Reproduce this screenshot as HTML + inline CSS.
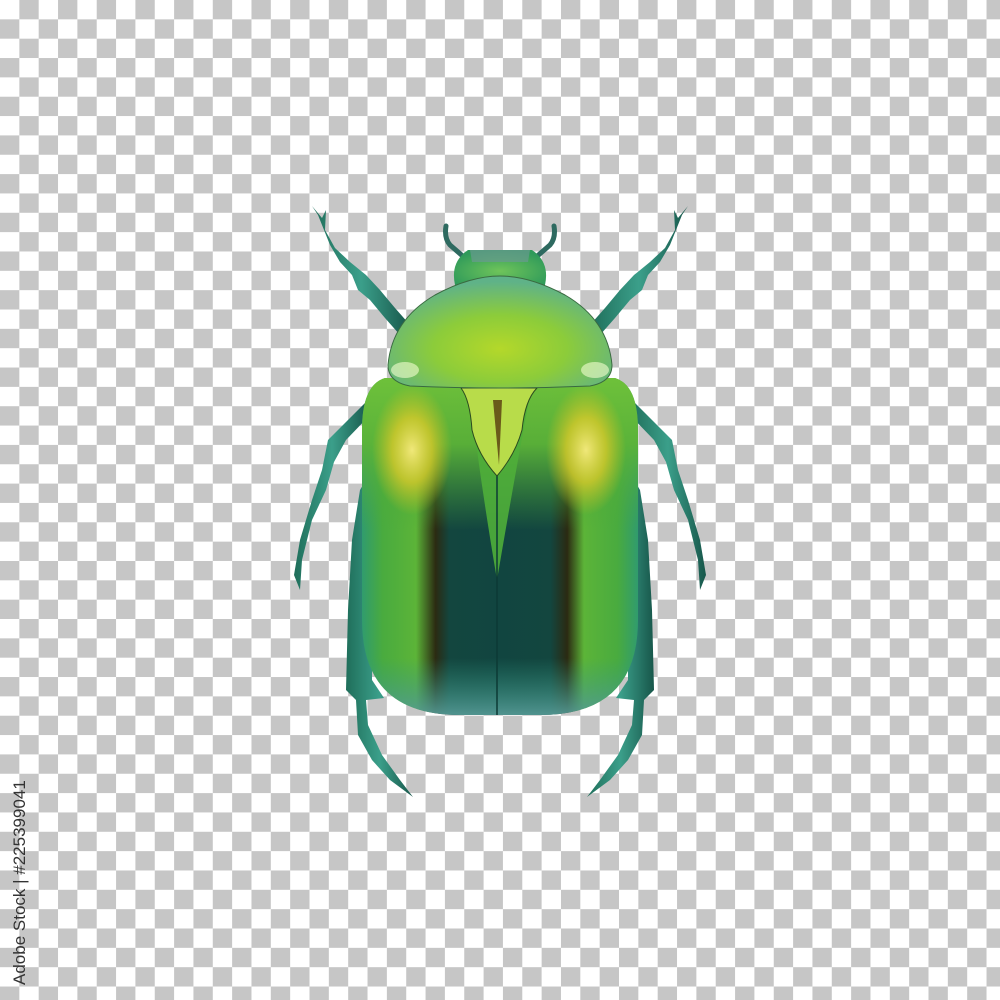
<!DOCTYPE html>
<html><head><style>
html,body{margin:0;padding:0;width:1000px;height:1000px;overflow:hidden}
body{background:repeating-conic-gradient(#c6c6c6 0 25%,#fff 0 50%) 0 0/38.7px 38.7px}
.t{position:absolute;left:10px;top:985px;transform-origin:0 0;transform:rotate(-90deg);font:17px "Liberation Sans",sans-serif;color:#333;white-space:nowrap}
svg{position:absolute;left:0;top:0}
</style></head><body>
<svg width="1000" height="1000" viewBox="0 0 1000 1000">
<defs>
<linearGradient id="leg" x1="0" y1="0" x2="1" y2="0"><stop offset="0" stop-color="#1f6e5a"/><stop offset=".5" stop-color="#3b9f8a"/><stop offset="1" stop-color="#17564a"/></linearGradient>
<linearGradient id="el" x1="0" y1="0" x2="1" y2="0">
<stop offset="0" stop-color="#2e9a72"/><stop offset=".08" stop-color="#49ab3f"/><stop offset=".2" stop-color="#5cb438"/><stop offset=".27" stop-color="#2b2a12"/><stop offset=".32" stop-color="#13463f"/><stop offset=".5" stop-color="#114540"/><stop offset=".68" stop-color="#13463f"/><stop offset=".74" stop-color="#2b2a12"/><stop offset=".8" stop-color="#5cb438"/><stop offset=".92" stop-color="#49ab3f"/><stop offset="1" stop-color="#2e9a72"/></linearGradient>
<linearGradient id="top" x1="0" y1="0" x2="0" y2="1"><stop offset="0" stop-color="#6fc13a"/><stop offset=".2" stop-color="#5cb438" stop-opacity=".95"/><stop offset=".45" stop-color="#4aa838" stop-opacity="0"/></linearGradient>
<linearGradient id="bot" x1="0" y1="0" x2="0" y2="1"><stop offset=".82" stop-color="#2e9a80" stop-opacity="0"/><stop offset="1" stop-color="#5a9a98"/></linearGradient>
<radialGradient id="pr" cx=".5" cy=".65" r=".6"><stop offset="0" stop-color="#b4d82a"/><stop offset=".5" stop-color="#8ccc3a"/><stop offset="1" stop-color="#5fb288"/></radialGradient>
<radialGradient id="yl" cx=".5" cy=".5" r=".5"><stop offset="0" stop-color="#f0e87a"/><stop offset=".5" stop-color="#d6c92a" stop-opacity=".8"/><stop offset="1" stop-color="#c8c020" stop-opacity="0"/></radialGradient>
<radialGradient id="hd" cx=".5" cy=".6" r=".6"><stop offset="0" stop-color="#6fc45a"/><stop offset="1" stop-color="#2f9a5a"/></radialGradient>
<clipPath id="ec"><path d="M385 378 Q362 385 362 430 L362 620 Q362 715 460 715 L540 715 Q638 715 638 620 L638 430 Q638 385 615 378 Z"/></clipPath>
</defs>
<path d="M465 258 L450 245 Q444 238 446 226" stroke="#2e6a60" stroke-width="5" fill="none" stroke-linecap="round"/>
<path d="M535 258 L550 245 Q556 238 554 226" stroke="#2e6a60" stroke-width="5" fill="none" stroke-linecap="round"/>
<path d="M400 335 L385 318 L370 300 L358 290 L352 275 L340 262 L330 245 L318 215 L312 206 L322 218 L326 210 L325 230 L335 248 L350 262 L366 275 L380 290 L395 308 L410 325 Z" fill="url(#leg)"/>
<path d="M600 335 L615 318 L630 300 L642 290 L648 275 L660 262 L670 245 L682 215 L688 206 L678 218 L674 210 L675 230 L665 248 L650 262 L634 275 L620 290 L605 308 L590 325 Z" fill="url(#leg)"/>
<path d="M368 400 L348 420 L328 440 L322 470 L312 500 L300 540 L294 575 L300 590 L302 560 L312 520 L326 490 L334 462 L346 440 L370 415 Z" fill="url(#leg)"/>
<path d="M632 400 L652 420 L672 440 L678 470 L688 500 L700 540 L706 575 L700 590 L698 560 L688 520 L674 490 L666 462 L654 440 L630 415 Z" fill="url(#leg)"/>
<path d="M372 470 L360 490 L352 540 L348 610 L346 690 L356 700 L358 735 L372 760 L390 780 L413 797 L400 780 L382 755 L368 725 L366 700 L384 698 L372 680 L372 600 L380 520 Z" fill="url(#leg)"/>
<path d="M628 470 L640 490 L648 540 L652 610 L654 690 L644 700 L642 735 L628 760 L610 780 L587 797 L600 780 L618 755 L632 725 L634 700 L616 698 L628 680 L628 600 L620 520 Z" fill="url(#leg)"/>
<g clip-path="url(#ec)">
<rect x="360" y="375" width="280" height="345" fill="url(#el)"/>
<rect x="360" y="375" width="280" height="345" fill="url(#top)"/>
<rect x="360" y="375" width="280" height="345" fill="url(#bot)"/>
<path d="M470 395 Q480 480 497 580 Q514 480 530 395 Z" fill="#4fae3a" opacity=".9"/>
<ellipse cx="412" cy="450" rx="40" ry="65" fill="url(#yl)"/>
<ellipse cx="586" cy="450" rx="40" ry="65" fill="url(#yl)"/>
<line x1="497" y1="470" x2="497" y2="715" stroke="#0c3a35" stroke-width="1.5"/>
</g>
<path d="M461 388 L537 388 Q525 400 522 430 Q515 455 497 476 Q478 455 472 430 Q470 400 461 388 Z" fill="#b8dc4a" stroke="#2a4a20" stroke-width="1"/>
<path d="M493 400 L502 400 L499 465 Z" fill="#6a5a1a"/>
<path d="M455 285 Q450 262 468 250 L532 250 Q550 262 545 285 Z" fill="url(#hd)"/>
<path d="M470 250 L530 250 L528 262 L472 262 Z" fill="#6a9a90" opacity=".7"/>
<path d="M388 365 Q392 320 435 295 Q470 276 500 276 Q530 276 565 295 Q608 320 612 365 Q612 382 590 386 Q545 388 500 388 Q455 388 410 386 Q388 382 388 365 Z" fill="url(#pr)" stroke="#3a6a40" stroke-width="1"/>
<ellipse cx="405" cy="370" rx="14" ry="8" fill="#f4ffd0" opacity=".6"/>
<ellipse cx="595" cy="370" rx="14" ry="8" fill="#f4ffd0" opacity=".6"/>
</svg>
<div class="t">Adobe Stock | #225399041</div>
</body></html>
